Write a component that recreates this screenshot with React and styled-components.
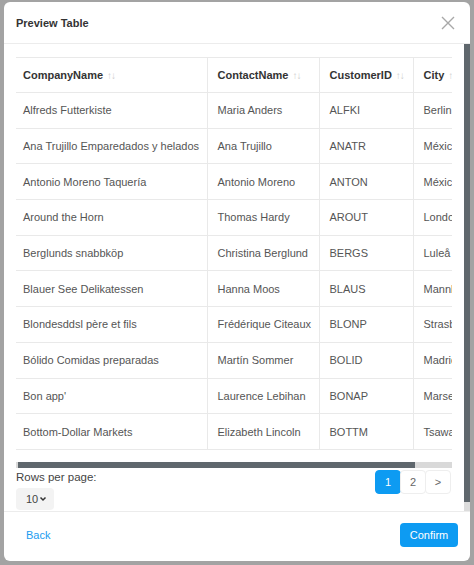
import React from "react";
import styled, { createGlobalStyle } from "styled-components";

const GlobalStyle = createGlobalStyle`
  html, body {
    margin: 0;
    padding: 0;
    background: #a3a3a3;
    font-family: "Liberation Sans", Arial, sans-serif;
  }
  * { box-sizing: border-box; }
`;

const Backdrop = styled.div`
  width: 474px;
  height: 565px;
  padding: 2px 4px 4px 4px;
  background: #a3a3a3;
`;

const Modal = styled.div`
  width: 466px;
  height: 559px;
  background: #fff;
  border-radius: 6px;
  display: flex;
  flex-direction: column;
  overflow: hidden;
`;

const Header = styled.div`
  height: 42px;
  flex: none;
  display: flex;
  align-items: center;
  justify-content: space-between;
  padding: 0 10px 0 12px;
  border-bottom: 1px solid #ececec;
`;

const Title = styled.h2`
  margin: 0;
  font-size: 11px;
  font-weight: 700;
  color: #333;
`;

const CloseButton = styled.button`
  border: 0;
  background: none;
  padding: 0;
  width: 24px;
  height: 24px;
  display: flex;
  align-items: center;
  justify-content: center;
  color: #a8a8a8;
  cursor: pointer;
`;

/* body: content + a drawn scrollbar rail */
const Body = styled.div`
  flex: 1;
  min-height: 0;
  display: flex;
  overflow: hidden;
`;

const Content = styled.div`
  flex: 1;
  min-width: 0;
  padding: 13px 12px 10px 12px;
`;

const VRail = styled.div`
  width: 6px;
  flex: none;
  background: #dcdcdc;
  display: flex;
  flex-direction: column;
`;

const VThumb = styled.div`
  height: ${(p) => p.$size}%;
  background: #5f676d;
`;

const TableClip = styled.div`
  width: 436px;
  overflow: hidden;
`;

const Table = styled.table`
  width: 475px;
  table-layout: fixed;
  border-collapse: collapse;
  font-size: 11px;
`;

const HeadCell = styled.th`
  height: 35px;
  padding: 0 0 0 ${(p) => (p.$first ? "7px" : "10px")};
  text-align: left;
  font-weight: 700;
  color: #333;
  white-space: nowrap;
  overflow: hidden;
  border-top: 1px solid #e9e9e9;
  border-bottom: 1px solid #e9e9e9;
  border-left: ${(p) => (p.$first ? "0" : "1px solid #e9e9e9")};
`;

const SortMark = styled.span`
  margin-left: 4px;
  font-weight: 400;
  font-size: 10px;
  color: #cdcdcd;
  letter-spacing: -1px;
`;

const Cell = styled.td`
  height: 35.7px;
  padding: 0 0 0 ${(p) => (p.$first ? "7px" : "10px")};
  color: #555;
  white-space: nowrap;
  overflow: hidden;
  border-bottom: 1px solid #e9e9e9;
  border-left: ${(p) => (p.$first ? "0" : "1px solid #e9e9e9")};
`;

const HRail = styled.div`
  margin-top: 12px;
  height: 6px;
  width: 436px;
  background: #d9d9d9;
  padding-left: 2px;
`;

const HThumb = styled.div`
  height: 100%;
  width: ${(p) => p.$size}%;
  background: #5f676d;
`;

const Footer = styled.div`
  display: flex;
  justify-content: space-between;
  align-items: flex-start;
  margin-top: 2px;
`;

const RowsPer = styled.div`
  display: flex;
  flex-direction: column;
  gap: 3px;
`;

const RowsLabel = styled.span`
  font-size: 11.5px;
  color: #444;
  line-height: 15px;
`;

const PageSelect = styled.div`
  width: 38px;
  height: 22px;
  border-radius: 4px;
  background: #f3f3f3;
  display: flex;
  align-items: center;
  padding-left: 10px;
  gap: 1px;
  font-size: 11px;
  color: #444;
`;

const Pager = styled.div`
  display: flex;
  padding-right: 1px;
`;

const PageButton = styled.button`
  width: 26px;
  height: 24px;
  border: 1px solid ${(p) => (p.$active ? "#0d9bf2" : "#eeeeee")};
  margin-left: -1px;
  border-radius: 4px;
  background: ${(p) => (p.$active ? "#0d9bf2" : "#fff")};
  color: ${(p) => (p.$active ? "#fff" : "#666")};
  font-family: inherit;
  font-size: 11px;
  padding: 0;
  cursor: pointer;
`;

const ModalFooter = styled.div`
  height: 50px;
  flex: none;
  border-top: 1px solid #ececec;
  display: flex;
  align-items: center;
  justify-content: space-between;
  padding: 0 12px 3px 22px;
`;

const BackLink = styled.a`
  font-size: 11px;
  color: #1a9cf0;
  cursor: pointer;
`;

const ConfirmButton = styled.button`
  height: 24px;
  width: 58px;
  border: 0;
  border-radius: 4px;
  background: #0d9bf2;
  color: #fff;
  font-family: inherit;
  font-size: 11px;
  padding: 0;
  cursor: pointer;
`;

const columns = [
  { key: "company", label: "CompanyName", width: 191 },
  { key: "contact", label: "ContactName", width: 112 },
  { key: "id", label: "CustomerID", width: 94 },
  { key: "city", label: "City", width: 78 },
];

const rows = [
  ["Alfreds Futterkiste", "Maria Anders", "ALFKI", "Berlin"],
  ["Ana Trujillo Emparedados y helados", "Ana Trujillo", "ANATR", "México D.F."],
  ["Antonio Moreno Taquería", "Antonio Moreno", "ANTON", "México D.F."],
  ["Around the Horn", "Thomas Hardy", "AROUT", "London"],
  ["Berglunds snabbköp", "Christina Berglund", "BERGS", "Luleå"],
  ["Blauer See Delikatessen", "Hanna Moos", "BLAUS", "Mannheim"],
  ["Blondesddsl père et fils", "Frédérique Citeaux", "BLONP", "Strasbourg"],
  ["Bólido Comidas preparadas", "Martín Sommer", "BOLID", "Madrid"],
  ["Bon app'", "Laurence Lebihan", "BONAP", "Marseille"],
  ["Bottom-Dollar Markets", "Elizabeth Lincoln", "BOTTM", "Tsawassen"],
];

export default function App() {
  return (
    <>
      <GlobalStyle />
      <Backdrop>
        <Modal>
          <Header>
            <Title>Preview Table</Title>
            <CloseButton>
              <svg width="14" height="14" viewBox="0 0 14 14">
                <path d="M1 1L13 13M13 1L1 13" stroke="currentColor" strokeWidth="1.4" fill="none" />
              </svg>
            </CloseButton>
          </Header>
          <Body>
            <Content>
              <TableClip>
                <Table>
                  <colgroup>
                    {columns.map((c) => (
                      <col key={c.key} style={{ width: c.width }} />
                    ))}
                  </colgroup>
                  <thead>
                    <tr>
                      {columns.map((c, i) => (
                        <HeadCell key={c.key} $first={i === 0}>
                          {c.label}
                          <SortMark>↑↓</SortMark>
                        </HeadCell>
                      ))}
                    </tr>
                  </thead>
                  <tbody>
                    {rows.map((r) => (
                      <tr key={r[2]}>
                        {r.map((v, i) => (
                          <Cell key={i} $first={i === 0}>{v}</Cell>
                        ))}
                      </tr>
                    ))}
                  </tbody>
                </Table>
              </TableClip>
              <HRail>
                <HThumb $size={91.5} />
              </HRail>
              <Footer>
                <RowsPer>
                  <RowsLabel>Rows per page:</RowsLabel>
                  <PageSelect>
                    10
                    <svg width="8" height="8" viewBox="0 0 8 8">
                      <path d="M1.5 2.5L4 5L6.5 2.5" stroke="#333" strokeWidth="1.5" fill="none" />
                    </svg>
                  </PageSelect>
                </RowsPer>
                <Pager>
                  <PageButton $active>1</PageButton>
                  <PageButton>2</PageButton>
                  <PageButton>&gt;</PageButton>
                </Pager>
              </Footer>
            </Content>
            <VRail>
              <VThumb $size={98} />
            </VRail>
          </Body>
          <ModalFooter>
            <BackLink>Back</BackLink>
            <ConfirmButton>Confirm</ConfirmButton>
          </ModalFooter>
        </Modal>
      </Backdrop>
    </>
  );
}
